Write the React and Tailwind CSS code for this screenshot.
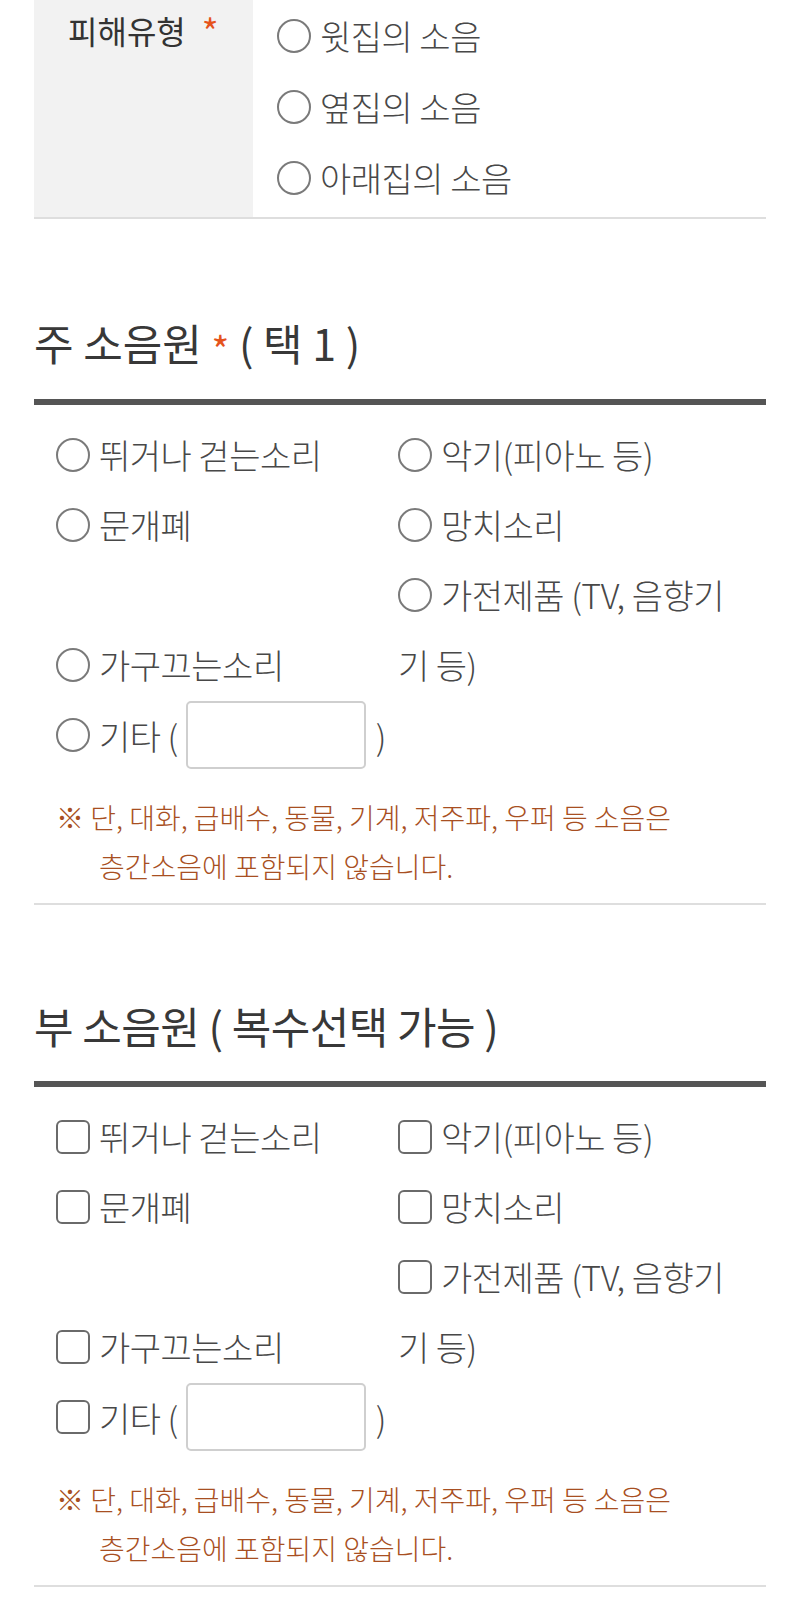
import React from "react";

const FONT = { fontFamily: '"Noto Sans CJK KR", "Noto Sans", sans-serif' };

function Radio() {
  return <span className="inline-block w-[34px] h-[34px] rounded-full border-2 border-[#7a7a7a] bg-white shrink-0 align-middle" />;
}

function Check() {
  return <span className="inline-block w-[34px] h-[34px] rounded-[6px] border-2 border-[#6a6a6a] bg-white shrink-0 align-middle" />;
}

function Item({ type, children, className = "" }) {
  return (
    <div className={"flex items-center gap-[9px] h-[70px] text-[34px] font-light text-[#484848] leading-[70px] " + className}>
      {type === "radio" ? <Radio /> : <Check />}
      <span className="tracking-[-0.5px]">{children}</span>
    </div>
  );
}

function Options({ type }) {
  return (
    <div className="grid grid-cols-[342px_1fr] auto-rows-[70px] pl-[22px] pt-[15px]">
      <Item type={type}>뛰거나 걷는소리</Item>
      <Item type={type}>악기(피아노 등)</Item>
      <Item type={type}>문개폐</Item>
      <Item type={type}>망치소리</Item>
      <div />
      <div className="row-span-2 text-[34px] font-light text-[#484848] leading-[70px] tracking-[-0.5px]">
        <span className="inline-flex items-center h-[70px] align-top">
          {type === "radio" ? <Radio /> : <Check />}
        </span>
        <span className="ml-[9px]">가전제품 (TV, 음향기</span>
        <br />
        <span>기 등)</span>
      </div>
      <Item type={type} className="col-start-1 row-start-4">가구끄는소리</Item>
      <div className="col-start-1 row-start-5 flex items-center h-[70px] text-[34px] font-light text-[#484848]">
        {type === "radio" ? <Radio /> : <Check />}
        <span className="ml-[9px] tracking-[-0.5px]">기타 (</span>
        <span className="ml-[8px] w-[180px] h-[68px] rounded-[5px] border-2 border-[#cfcfcf] bg-white" />
        <span className="ml-[10px]">)</span>
      </div>
    </div>
  );
}

function Note() {
  return (
    <div className="pl-[22px] pt-[23px] pb-[12px] text-[28px] font-light leading-[49px] text-[#a84f22]">
      <p>※ 단, 대화, 급배수, 동물, 기계, 저주파, 우퍼 등 소음은</p>
      <p className="pl-[43px]">층간소음에 포함되지 않습니다.</p>
    </div>
  );
}

export default function App() {
  return (
    <div className="w-[800px] min-h-[1600px] bg-white" style={FONT}>
      <div className="px-[34px]">
        {/* 피해유형 */}
        <div className="flex border-b-2 border-[#dedede]">
          <div className="w-[219px] bg-[#f2f2f2] pl-[34px] pt-[10px]">
            <div className="text-[32px] leading-[40px] text-[#333]">
              피해유형<span className="ml-[16px] text-[#e5531c] text-[36px] align-top">*</span>
            </div>
          </div>
          <div className="pl-[24px] pb-[4px]">
            {["윗집의 소음", "옆집의 소음", "아래집의 소음"].map((t) => (
              <div key={t} className="flex items-center gap-[9px] h-[71px] text-[34px] font-light text-[#484848]">
                <Radio />
                <span className="tracking-[-0.5px]">{t}</span>
              </div>
            ))}
          </div>
        </div>

        {/* 주 소음원 */}
        <h2 className="mt-[98px] mb-[25px] text-[43px] leading-[50px] text-[#383838] font-normal">
          주 소음원 <span className="text-[#e5531c] text-[38px] align-middle">*</span> ( 택 1 )
        </h2>
        <div className="h-[6px] bg-[#555]" />
        <Options type="radio" />
        <Note />
        <div className="h-[2px] bg-[#dedede]" />

        {/* 부 소음원 */}
        <h2 className="mt-[95px] mb-[31px] text-[43px] leading-[50px] text-[#383838] font-normal tracking-[-0.5px]">
          부 소음원 ( 복수선택 가능 )
        </h2>
        <div className="h-[6px] bg-[#555]" />
        <Options type="check" />
        <Note />
        <div className="h-[2px] bg-[#dedede]" />
      </div>
    </div>
  );
}
